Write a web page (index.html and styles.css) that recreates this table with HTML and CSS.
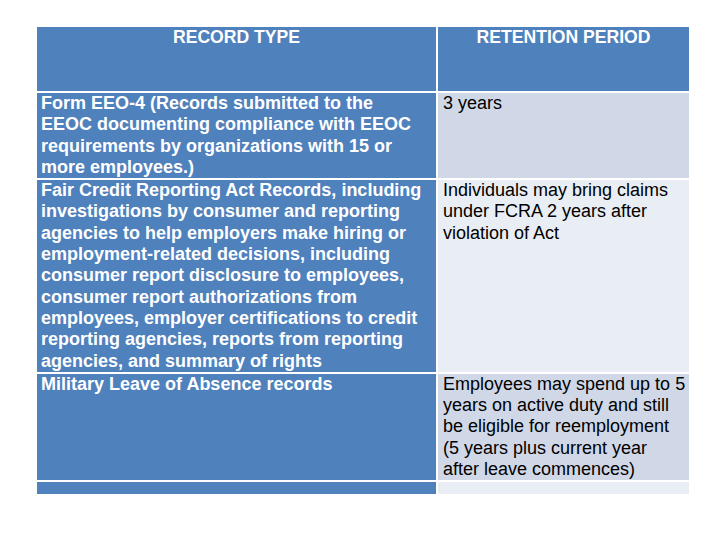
FILE: index.html
```html
<!DOCTYPE html>
<html>
<head>
<meta charset="utf-8">
<link rel="stylesheet" href="styles.css">
</head>
<body>
<div class="table">
  <div class="cell head">RECORD TYPE</div>
  <div class="cell head">RETENTION PERIOD</div>

  <div class="cell type">Form EEO-4 (Records submitted to the<br>EEOC documenting compliance with EEOC<br>requirements by organizations with 15 or<br>more employees.)</div>
  <div class="cell period dark">3 years</div>

  <div class="cell type">Fair Credit Reporting Act Records, including<br>investigations by consumer and reporting<br>agencies to help employers make hiring or<br>employment-related decisions, including<br>consumer report disclosure to employees,<br>consumer report authorizations from<br>employees, employer certifications to credit<br>reporting agencies, reports from reporting<br>agencies, and summary of rights</div>
  <div class="cell period light">Individuals may bring claims<br>under FCRA 2 years after<br>violation of Act</div>

  <div class="cell type">Military Leave of Absence records</div>
  <div class="cell period dark">Employees may spend up to 5<br>years on active duty and still<br>be eligible for reemployment<br>(5 years plus current year<br>after leave commences)</div>

  <div class="cell type empty"></div>
  <div class="cell period light empty"></div>
</div>
</body>
</html>
```

FILE: styles.css
```css
html, body {
  margin: 0;
  padding: 0;
  background: #ffffff;
}
body {
  padding: 27px 0 0 37px;
  font-family: "Liberation Sans", Arial, sans-serif;
  font-size: 18px;
  line-height: 21.3px;
}
.table {
  display: grid;
  grid-template-columns: 399px 251px;
  column-gap: 2px;
  row-gap: 2px;
  width: 652px;
}
.cell {
  white-space: nowrap;
}
.head {
  background: #4f81bd;
  color: #ffffff;
  font-weight: bold;
  text-align: center;
  height: 64px;
  font-size: 17.6px;
}
.type {
  background: #4f81bd;
  color: #ffffff;
  font-weight: bold;
  padding-left: 4px;
}
.period {
  color: #000000;
  padding-left: 5px;
}
.dark {
  background: #d0d8e8;
}
.light {
  background: #e9edf4;
}
.empty {
  height: 12px;
}
```
